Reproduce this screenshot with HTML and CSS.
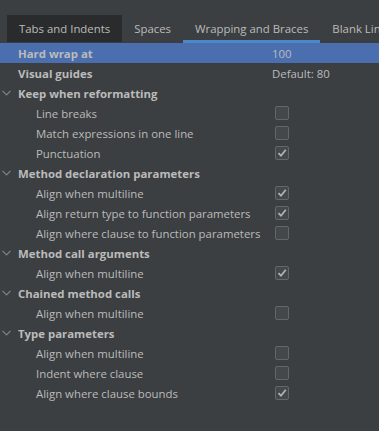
FILE: index.html
```html
<!DOCTYPE html>
<html>
<head>
<meta charset="utf-8">
<link rel="stylesheet" href="styles.css">
</head>
<body>
<div class="tabbar">
  <div class="tab hover">Tabs and Indents</div>
  <div class="tab">Spaces</div>
  <div class="tab selected">Wrapping and Braces</div>
  <div class="tab">Blank Lines</div>
</div>
<div class="tree">
  <div class="row sel"><span class="label b top">Hard wrap at</span><span class="val">100</span></div>
  <div class="row"><span class="label b top">Visual guides</span><span class="val">Default: 80</span></div>

  <div class="row"><span class="chev"><svg width="9" height="6" viewBox="0 0 9 6"><path d="M0.5 0.8 L4.5 4.8 L8.5 0.8" fill="none" stroke="#7f8386" stroke-width="1.2"/></svg></span><span class="label b">Keep when reformatting</span></div>
  <div class="row"><span class="label sub">Line breaks</span><span class="val"><span class="cb"></span></span></div>
  <div class="row"><span class="label sub">Match expressions in one line</span><span class="val"><span class="cb"></span></span></div>
  <div class="row"><span class="label sub">Punctuation</span><span class="val"><span class="cb"><svg width="14" height="14" viewBox="0 0 14 14"><path d="M3.5 7.2 L6 9.8 L10.8 3.8" fill="none" stroke="#b4b4b4" stroke-width="1.7"/></svg></span></span></div>

  <div class="row"><span class="chev"><svg width="9" height="6" viewBox="0 0 9 6"><path d="M0.5 0.8 L4.5 4.8 L8.5 0.8" fill="none" stroke="#7f8386" stroke-width="1.2"/></svg></span><span class="label b">Method declaration parameters</span></div>
  <div class="row"><span class="label sub">Align when multiline</span><span class="val"><span class="cb"><svg width="14" height="14" viewBox="0 0 14 14"><path d="M3.5 7.2 L6 9.8 L10.8 3.8" fill="none" stroke="#b4b4b4" stroke-width="1.7"/></svg></span></span></div>
  <div class="row"><span class="label sub">Align return type to function parameters</span><span class="val"><span class="cb"><svg width="14" height="14" viewBox="0 0 14 14"><path d="M3.5 7.2 L6 9.8 L10.8 3.8" fill="none" stroke="#b4b4b4" stroke-width="1.7"/></svg></span></span></div>
  <div class="row"><span class="label sub">Align where clause to function parameters</span><span class="val"><span class="cb"></span></span></div>

  <div class="row"><span class="chev"><svg width="9" height="6" viewBox="0 0 9 6"><path d="M0.5 0.8 L4.5 4.8 L8.5 0.8" fill="none" stroke="#7f8386" stroke-width="1.2"/></svg></span><span class="label b">Method call arguments</span></div>
  <div class="row"><span class="label sub">Align when multiline</span><span class="val"><span class="cb"><svg width="14" height="14" viewBox="0 0 14 14"><path d="M3.5 7.2 L6 9.8 L10.8 3.8" fill="none" stroke="#b4b4b4" stroke-width="1.7"/></svg></span></span></div>

  <div class="row"><span class="chev"><svg width="9" height="6" viewBox="0 0 9 6"><path d="M0.5 0.8 L4.5 4.8 L8.5 0.8" fill="none" stroke="#7f8386" stroke-width="1.2"/></svg></span><span class="label b">Chained method calls</span></div>
  <div class="row"><span class="label sub">Align when multiline</span><span class="val"><span class="cb"></span></span></div>

  <div class="row"><span class="chev"><svg width="9" height="6" viewBox="0 0 9 6"><path d="M0.5 0.8 L4.5 4.8 L8.5 0.8" fill="none" stroke="#7f8386" stroke-width="1.2"/></svg></span><span class="label b">Type parameters</span></div>
  <div class="row"><span class="label sub">Align when multiline</span><span class="val"><span class="cb"></span></span></div>
  <div class="row"><span class="label sub">Indent where clause</span><span class="val"><span class="cb"></span></span></div>
  <div class="row"><span class="label sub">Align where clause bounds</span><span class="val"><span class="cb"><svg width="14" height="14" viewBox="0 0 14 14"><path d="M3.5 7.2 L6 9.8 L10.8 3.8" fill="none" stroke="#b4b4b4" stroke-width="1.7"/></svg></span></span></div>
</div>
</body>
</html>
```
FILE: styles.css
```css
html, body {
  margin: 0;
  padding: 0;
  background: #3c3f41;
  height: 100%;
}
body {
  font-family: "Open Sans", "Noto Sans", sans-serif;
  font-size: 11.4px;
  color: #bbbbbb;
  overflow: hidden;
}
.tabbar {
  display: flex;
  padding: 15px 0 0 7px;
  white-space: nowrap;
  overflow: hidden;
}
.tab {
  height: 28px;
  line-height: 28px;
  padding: 0 12px 0 12px;
  flex: none;
}
.tab.hover {
  background: #2a2b2c;
  box-shadow: inset 0 -1px 0 #3c3f41;
}
.tab.selected {
  box-shadow: inset 0 -3px 0 #4a88c7;
}
.tree {
  display: flex;
  flex-direction: column;
}
.row {
  height: 20px;
  display: flex;
  align-items: center;
  white-space: nowrap;
}
.row.sel {
  background: #4b6eaf;
}
.chev {
  width: 18px;
  flex: none;
  display: flex;
  justify-content: flex-start;
  padding-left: 2px;
  box-sizing: border-box;
}
.label {
  width: 272px;
  flex: none;
  overflow: hidden;
  box-sizing: border-box;
}
.label.b {
  font-weight: bold;
  width: 254px;
}
.label.top {
  padding-left: 18px;
  width: 272px;
}
.label.sub {
  padding-left: 36px;
}
.val {
  flex: none;
  display: flex;
  align-items: center;
}
.cb {
  width: 14px;
  height: 14px;
  box-sizing: border-box;
  border: 1px solid #646768;
  border-radius: 2px;
  background: #43494a;
  margin-left: 3px;
  display: flex;
}
.cb svg {
  margin: -1px;
}
```
